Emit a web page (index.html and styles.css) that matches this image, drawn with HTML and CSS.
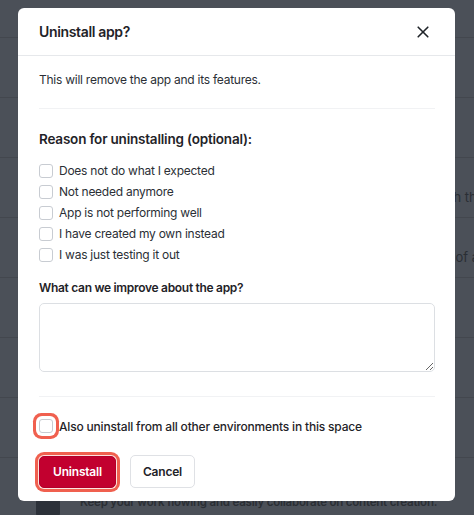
FILE: index.html
```html
<!DOCTYPE html>
<html>
<head>
<meta charset="utf-8">
<link rel="stylesheet" href="styles.css">
</head>
<body>
<div class="page">
  <div class="row"></div>
  <div class="row"></div>
  <div class="row"></div>
  <div class="row"><span class="bgtext">Apps built with the App Framework</span></div>
  <div class="row"><span class="bgtext">Find releases of apps and features</span></div>
  <div class="row"></div>
  <div class="row"></div>
  <div class="row"></div>
  <div class="row last"><span class="bgicon"></span><span class="bgtext strong">Keep your work flowing and easily collaborate on content creation.</span></div>
</div>

<div class="modal">
  <div class="modal-header">
    <h2 class="modal-title">Uninstall app?</h2>
    <button class="close" aria-label="Close">
      <svg width="12" height="12" viewBox="0 0 12 12"><path d="M1.2 1.2L10.8 10.8M10.8 1.2L1.2 10.8" stroke="#1f2328" stroke-width="1.6" stroke-linecap="round"/></svg>
    </button>
  </div>
  <div class="modal-body">
    <p class="intro">This will remove the app and its features.</p>
    <div class="sep"></div>
    <h3 class="section">Reason for uninstalling (optional):</h3>
    <ul class="reasons">
      <li><span class="cb"></span>Does not do what I expected</li>
      <li><span class="cb"></span>Not needed anymore</li>
      <li><span class="cb"></span>App is not performing well</li>
      <li><span class="cb"></span>I have created my own instead</li>
      <li><span class="cb"></span>I was just testing it out</li>
    </ul>
    <label class="field-label">What can we improve about the app?</label>
    <textarea class="feedback"></textarea>
    <div class="sep sep2"></div>
    <div class="also"><span class="cb focus"></span>Also uninstall from all other environments in this space</div>
    <div class="actions">
      <button class="btn danger">Uninstall</button>
      <button class="btn secondary">Cancel</button>
    </div>
  </div>
</div>
</body>
</html>
```

FILE: styles.css
```css
html, body {
  margin: 0;
  padding: 0;
}
body {
  width: 474px;
  height: 515px;
  overflow: hidden;
  background: #4b5058;
  font-family: Inter, "Liberation Sans", sans-serif;
  position: relative;
}
.page {
  width: 474px;
  height: 515px;
  overflow: hidden;
}
.row {
  height: 60px;
  border-bottom: 1px solid #43474e;
  display: flex;
  align-items: center;
  box-sizing: border-box;
  white-space: nowrap;
  overflow: hidden;
}
.row:first-child {
  height: 38px;
}
.bgtext {
  font-size: 13px;
  color: #2a2e34;
  margin-left: 370px;
  padding-top: 18px;
}
.row.last {
  border-bottom: none;
  align-items: flex-start;
  padding-left: 36px;
}
.bgicon {
  width: 24px;
  height: 24px;
  border-radius: 4px;
  background: #2c3139;
  margin-top: 35px;
  margin-right: 20px;
  flex: none;
}
.bgtext.strong {
  margin-left: 0;
  padding-top: 0;
  font-size: 11.5px;
  font-weight: 600;
  letter-spacing: -0.2px;
  color: #2a2e34;
  margin-top: 37px;
}

.modal {
  position: absolute;
  left: 18px;
  top: 8px;
  width: 437px;
  height: 493px;
  background: #fff;
  border-radius: 6px;
  box-sizing: border-box;
  overflow: hidden;
}
.modal-header {
  height: 47px;
  border-bottom: 1px solid #e6e8eb;
  display: flex;
  align-items: center;
  justify-content: space-between;
  padding: 0 20px 0 21px;
}
.modal-title {
  margin: 0;
  font-size: 14px;
  font-weight: 600;
  color: #1f2328;
  letter-spacing: -0.35px;
}
.close {
  border: none;
  background: none;
  padding: 0;
  width: 24px;
  height: 24px;
  display: flex;
  align-items: center;
  justify-content: center;
}
.modal-body {
  padding: 0 20px 0 21px;
  color: #2b2f36;
  font-size: 12px;
  letter-spacing: -0.25px;
}
.intro {
  margin: 14px 0 0;
  line-height: 20px;
}
.sep {
  height: 1px;
  background: #f1f2f4;
  margin-top: 18px;
}
.section {
  margin: 19px 0 0;
  font-size: 13.5px;
  font-weight: 600;
  line-height: 22px;
  color: #1f2328;
  letter-spacing: -0.2px;
}
.reasons {
  list-style: none;
  margin: 10px 0 0;
  padding: 0;
}
.reasons li {
  height: 21px;
  display: flex;
  align-items: center;
  gap: 6px;
  line-height: 21px;
}
.cb {
  width: 12px;
  height: 12px;
  border: 1px solid #c8ccd2;
  border-radius: 3px;
  background: #fff;
  flex: none;
}
.field-label {
  display: block;
  margin-top: 13px;
  line-height: 20px;
  font-weight: 600;
  color: #1f2328;
  letter-spacing: -0.3px;
}
.feedback {
  display: block;
  margin-top: 5px;
  width: 396px;
  height: 69px;
  box-sizing: border-box;
  border: 1px solid #dcdfe3;
  border-radius: 5px;
  resize: vertical;
  font-family: inherit;
}
.sep2 {
  margin-top: 24px;
}
.also {
  margin-top: 19px;
  height: 20px;
  display: flex;
  align-items: center;
  gap: 6px;
  font-weight: 500;
  color: #1f2328;
  letter-spacing: -0.18px;
}
.cb.focus {
  box-shadow: 0 0 0 3px #fff, 0 0 0 6px #f0604f;
  border-radius: 3px;
}
.actions {
  margin-top: 19px;
  display: flex;
  gap: 14px;
  align-items: center;
}
.btn {
  height: 32px;
  border-radius: 5px;
  font-family: inherit;
  font-size: 12px;
  font-weight: 600;
  letter-spacing: -0.2px;
  padding: 0;
  box-sizing: border-box;
}
.btn.danger {
  width: 77px;
  background: #c2002f;
  color: #fff;
  border: 1px solid #b3002a;
  box-shadow: 0 0 0 1px #fde3df, 0 0 0 4px #f0604f;
}
.btn.secondary {
  width: 65px;
  height: 33px;
  background: #fff;
  color: #1f2328;
  border: 1px solid #dfe1e5;
}
```
